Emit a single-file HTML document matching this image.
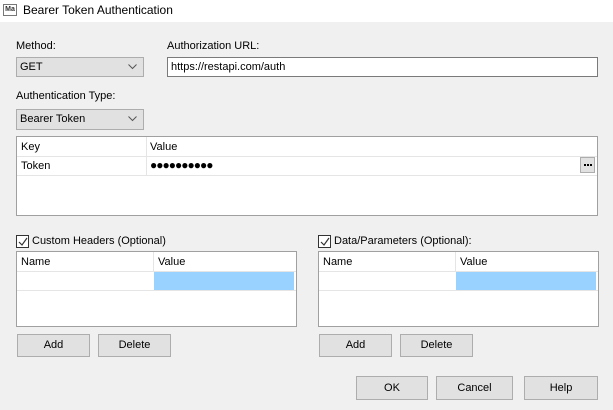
<!DOCTYPE html>
<html><head><style>
*{box-sizing:border-box;margin:0;padding:0}
body{width:613px;height:410px;background:#f0f0f0;font-family:"Liberation Sans",Tahoma,sans-serif;font-size:11px;color:#000;position:relative;overflow:hidden}
.a{position:absolute}
.t{position:absolute;white-space:nowrap;line-height:14px}
.combo{position:absolute;background:#e1e1e1;border:1px solid #adadad;padding-left:3px;line-height:18px}
.combo svg{position:absolute;right:6px;top:6px}
.inp{position:absolute;background:#fff;border:1px solid #7a7a7a;padding-left:3px;line-height:18px}
.grid{position:absolute;background:#fff;border:1px solid #a0a0a0}
.hl{position:absolute;height:1px;background:#e5e5e5}
.vl{position:absolute;width:1px;background:#e5e5e5}
.btn{position:absolute;background:#e1e1e1;border:1px solid #adadad;text-align:center;line-height:21px}
.cb{position:absolute;width:13px;height:13px;border:1px solid #333;background:#fff}
</style></head><body>
<div class="a" style="left:0;top:0;width:613px;height:22px;background:#fff"></div>
<div class="a" style="left:3px;top:4px;width:14px;height:12px;border:1px solid #777;font-size:7px;line-height:10px;text-align:center;color:#333;font-weight:bold">Ma</div>
<div class="t" style="left:23px;top:3px;font-size:12px">Bearer Token Authentication</div>

<div class="t" style="left:16px;top:39px">Method:</div>
<div class="combo" style="left:16px;top:57px;width:128px;height:20px">GET<svg width="9" height="6"><path d="M0.5 0.5L4.5 4.5L8.5 0.5" stroke="#555" fill="none"/></svg></div>
<div class="t" style="left:167px;top:39px">Authorization URL:</div>
<div class="inp" style="left:167px;top:57px;width:431px;height:20px">https://restapi.com/auth</div>

<div class="t" style="left:16px;top:89px">Authentication Type:</div>
<div class="combo" style="left:16px;top:109px;width:128px;height:21px">Bearer Token<svg width="9" height="6"><path d="M0.5 0.5L4.5 4.5L8.5 0.5" stroke="#555" fill="none"/></svg></div>

<div class="grid" style="left:16px;top:136px;width:582px;height:80px"></div>
<div class="hl" style="left:17px;top:156px;width:580px"></div>
<div class="hl" style="left:17px;top:175px;width:580px"></div>
<div class="vl" style="left:146px;top:137px;height:38px"></div>
<div class="t" style="left:21px;top:140px">Key</div>
<div class="t" style="left:150px;top:140px">Value</div>
<div class="t" style="left:21px;top:159px">Token</div>
<div class="t" style="left:150px;top:158px;font-size:12px;letter-spacing:-1px">●●●●●●●●●●</div>
<div class="a" style="left:580px;top:157px;width:15px;height:16px;background:#e1e1e1;border:1px solid #adadad"><svg class="a" style="left:1px;top:6px" width="12" height="3"><rect x="2" y="0" width="2" height="2"/><rect x="5" y="0" width="2" height="2"/><rect x="8" y="0" width="2" height="2"/></svg></div>

<div class="cb" style="left:16px;top:235px"></div>
<svg class="a" style="left:17px;top:236px" width="12" height="12"><path d="M2 6L5 9L10 2" stroke="#333" stroke-width="1.2" fill="none"/></svg>
<div class="t" style="left:32px;top:234px">Custom Headers (Optional)</div>
<div class="grid" style="left:16px;top:251px;width:281px;height:76px"></div>
<div class="hl" style="left:17px;top:271px;width:279px"></div>
<div class="hl" style="left:17px;top:290px;width:279px"></div>
<div class="vl" style="left:153px;top:252px;height:19px"></div>
<div class="a" style="left:154px;top:272px;width:140px;height:18px;background:#99d1ff"></div>
<div class="t" style="left:21px;top:255px">Name</div>
<div class="t" style="left:158px;top:255px">Value</div>
<div class="btn" style="left:17px;top:334px;width:73px;height:23px">Add</div>
<div class="btn" style="left:98px;top:334px;width:73px;height:23px">Delete</div>

<div class="cb" style="left:318px;top:235px"></div>
<svg class="a" style="left:319px;top:236px" width="12" height="12"><path d="M2 6L5 9L10 2" stroke="#333" stroke-width="1.2" fill="none"/></svg>
<div class="t" style="left:334px;top:234px">Data/Parameters (Optional):</div>
<div class="grid" style="left:318px;top:251px;width:281px;height:76px"></div>
<div class="hl" style="left:319px;top:271px;width:279px"></div>
<div class="hl" style="left:319px;top:290px;width:279px"></div>
<div class="vl" style="left:455px;top:252px;height:19px"></div>
<div class="a" style="left:456px;top:272px;width:140px;height:18px;background:#99d1ff"></div>
<div class="t" style="left:323px;top:255px">Name</div>
<div class="t" style="left:460px;top:255px">Value</div>
<div class="btn" style="left:319px;top:334px;width:73px;height:23px">Add</div>
<div class="btn" style="left:400px;top:334px;width:73px;height:23px">Delete</div>

<div class="btn" style="left:356px;top:376px;width:72px;height:24px;line-height:22px">OK</div>
<div class="btn" style="left:436px;top:376px;width:77px;height:24px;line-height:22px">Cancel</div>
<div class="btn" style="left:524px;top:376px;width:74px;height:24px;line-height:22px">Help</div>
</body></html>
